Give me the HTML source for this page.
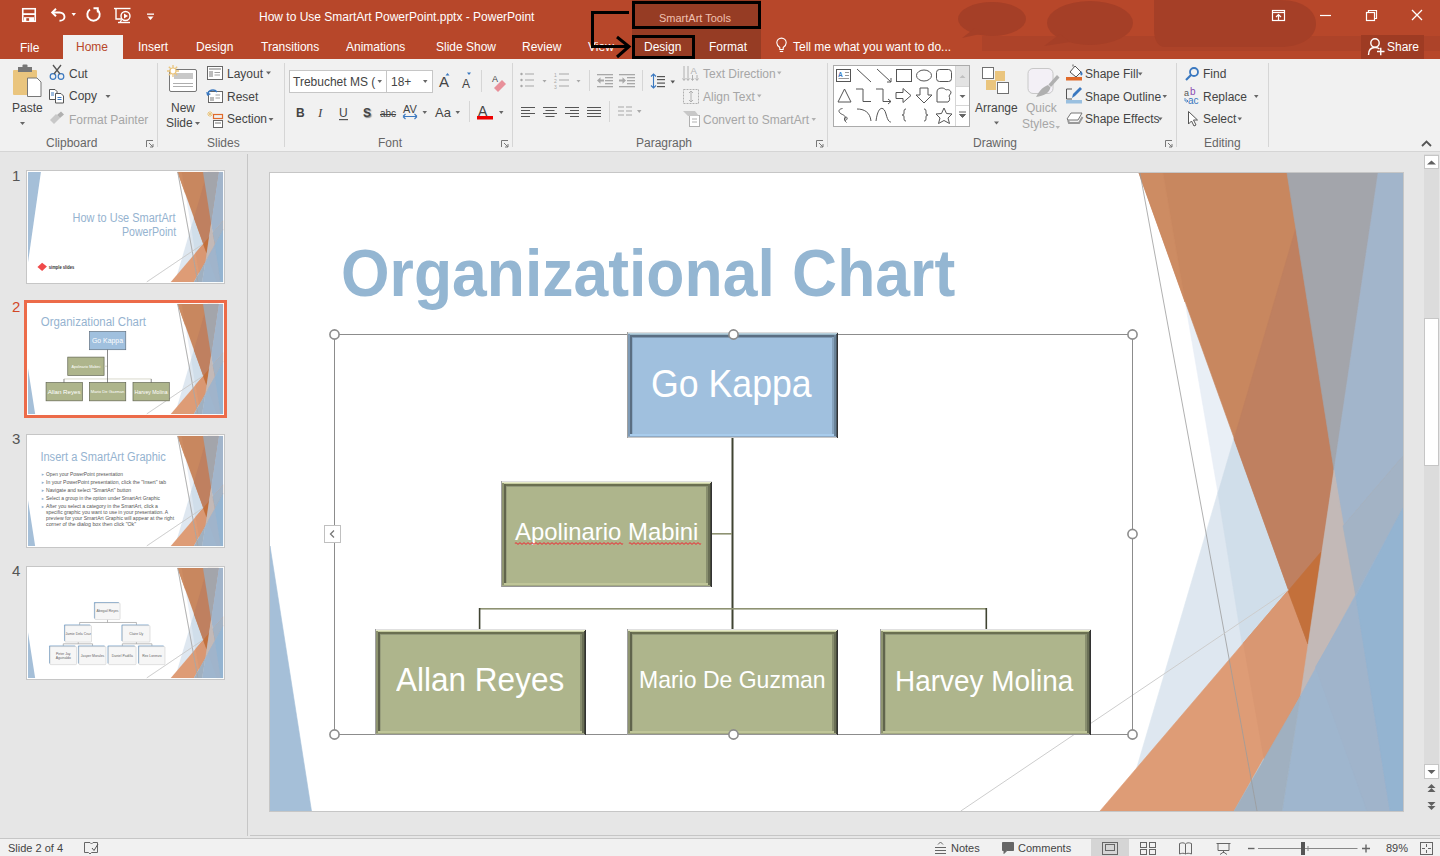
<!DOCTYPE html>
<html><head><meta charset="utf-8">
<style>
*{margin:0;padding:0;box-sizing:border-box}
html,body{width:1440px;height:856px;overflow:hidden;background:#e6e6e6;font-family:"Liberation Sans",sans-serif;position:relative}
.abs{position:absolute}
svg{position:absolute;overflow:visible}
#hdr{position:absolute;left:0;top:0;width:1440px;height:59px;background:#b7472a;overflow:hidden}
#ribbon{position:absolute;left:0;top:59px;width:1440px;height:93px;background:#f1f1f1;border-bottom:1px solid #d5d5d5}
#status{position:absolute;left:0;top:838px;width:1440px;height:18px;background:#f1f1f1;border-top:1px solid #c6c6c6}
.t{position:absolute;white-space:nowrap;font-size:12px;line-height:14px;color:#fff}
.tab{top:40px;font-size:12px}
.r{position:absolute;white-space:nowrap;font-size:12px;line-height:14px;color:#444}
.lbl{color:#666}
.s{position:absolute;white-space:nowrap;font-size:11px;line-height:13px;color:#444;top:842px}
.num{position:absolute;font-size:15px;line-height:17px;color:#555}
.thumb{position:absolute;width:199px;height:114px;border:1px solid #c6c6c6;background:#fff}
#slide{position:absolute;left:269px;top:172px;width:1135px;height:640px;background:#fff;border:1px solid #c6c6c6;overflow:hidden}
#slide svg{left:0;top:0}
.title{position:absolute;white-space:nowrap;font-size:67px;line-height:80px;font-weight:bold;color:#94b6d2}
.box{position:absolute}
.st{position:absolute;white-space:nowrap;transform-origin:0 0}
.box .bev{display:none}
.olive{background:#aeb58c;box-shadow:inset 1px 0 0 #a0a0a0,inset 0 1px 0 #e0e0e0,inset -1px 0 0 #333,inset 0 -1px 0 #959595,inset 0 2px 0 #e6eac8,inset -2px 0 0 #45493a,inset 0 -2px 0 #a3a983,inset 3px 0 0 #8e9470,inset 0 3px 0 #c5cba0,inset -4px 0 0 #6a6f56,inset 0 -4px 0 #bfc598,inset 5px 0 0 #60644c,inset 0 5px 0 #6a6f50,inset -6px 0 0 #888e6e,inset 0 6px 0 #92987a,inset 6px 0 0 #9aa07e}
.blue{background:#a0c0de;box-shadow:inset 1px 0 0 #a0a0a0,inset 0 1px 0 #dcdcdc,inset -1px 0 0 #333,inset 0 -1px 0 #c8c8c8,inset 0 2px 0 #b8d0dc,inset -2px 0 0 #4d5a66,inset 0 -2px 0 #8faac5,inset 3px 0 0 #7e9ab5,inset 0 3px 0 #9ab8c8,inset -4px 0 0 #6a8398,inset 0 -4px 0 #a8ccec,inset 5px 0 0 #5a6e82,inset 0 5px 0 #5a6e82,inset -6px 0 0 #86a2bc,inset 0 6px 0 #7d98b2,inset 6px 0 0 #8cabc8}
</style></head><body>

<div id="hdr">
  <svg class="abs" style="left:0;top:0" width="1440" height="59">
    <rect x="982" y="36" width="458" height="15" fill="#ad4329"/>
    <g fill="#a53f27">
      <ellipse cx="992" cy="19" rx="34" ry="17"/>
      <path d="M962 38 L975 28 L985 33 Z"/>
      <ellipse cx="1090" cy="23" rx="43" ry="22"/>
      <path d="M1044 46 L1060 34 L1070 42 Z"/>
      <path d="M1154 0 H1280 C1305 0 1316 12 1316 24 C1316 38 1300 47 1280 47 H1165 C1158 47 1154 40 1154 30 Z"/>
    </g>
    <rect x="632" y="0" width="129" height="59" fill="#963c24"/>
    <rect x="1361" y="35" width="63" height="24" fill="#9e3b23"/>
    <!-- QAT icons -->
    <rect x="22.75" y="8.75" width="12.5" height="12.5" fill="none" stroke="#fff" stroke-width="1.6"/>
    <rect x="22" y="13.2" width="14" height="1.8" fill="#fff"/>
    <rect x="24" y="17.2" width="10" height="4.5" fill="#fff"/>
    <rect x="26.3" y="18.2" width="2.8" height="2.6" fill="#b7472a"/>
    <g fill="none" stroke="#fff" stroke-width="1.9">
      <path d="M52.5 12.5 H59.5 C62.5 12.5 64.5 14.5 64.5 17 C64.5 19.5 62 20.8 59.5 20.8"/>
      <path d="M56 8.8 L52.2 12.5 L56 16.2"/>
      <path d="M90 9.5 A6.2 6.2 0 1 0 97 9.5"/>
      <path d="M93.5 8.3 H97.8 V12.6"/>
    </g>
    <path d="M71.5 13 H76 L73.75 16 Z" fill="#fff"/>
    <g fill="none" stroke="#fff" stroke-width="1.4">
      <path d="M114 8.5 H130.5"/>
      <path d="M116 9 V19 H122"/>
      <circle cx="125.5" cy="16" r="4.5"/>
      <path d="M118 22.5 H130"/>
      <path d="M121.5 20 L120 22.5"/>
    </g>
    <path d="M124 13.5 L128 16 L124 18.5 Z" fill="#fff"/>
    <rect x="147" y="13.5" width="7" height="1.3" fill="#fff"/>
    <path d="M147.5 16.5 H153.5 L150.5 20 Z" fill="#fff"/>
    <!-- window controls -->
    <g fill="none" stroke="#fff" stroke-width="1.2">
      <rect x="1272.5" y="10.5" width="12" height="10"/>
      <path d="M1272.5 12.5 H1284.5"/>
      <path d="M1278.5 20 V14.5 M1276 17 L1278.5 14.5 L1281 17"/>
      <path d="M1320 15.5 H1331"/>
      <rect x="1366.5" y="12.5" width="8" height="8"/>
      <path d="M1368.5 12.5 V10.5 H1376.5 V18.5 H1374.5"/>
      <path d="M1412 10 L1422 20 M1422 10 L1412 20" stroke-width="1.3"/>
    </g>
    <!-- lightbulb -->
    <g fill="none" stroke="#fff" stroke-width="1.1">
      <path d="M779.8 49.5 V47.5 C777.3 45.8 776.8 44 776.8 42.8 A4.7 4.7 0 0 1 786.2 42.8 C786.2 44 785.7 45.8 783.2 47.5 V49.5 Z"/>
      <path d="M779.8 51.5 H783.2"/>
    </g>
    <!-- share person -->
    <g fill="none" stroke="#fff" stroke-width="1.4">
      <circle cx="1375" cy="43" r="4.2"/>
      <path d="M1368.5 55 C1368.5 49.5 1371 47.5 1375 47.5 C1377 47.5 1378.5 48 1379.5 49"/>
      <path d="M1377 51.5 H1384.5 M1380.75 47.75 V55.25"/>
    </g>
  </svg>
  <div class="abs" style="left:63px;top:35px;width:60px;height:24px;background:#f1f1f1"></div>
  <div class="t" style="left:259px;top:10px;font-size:12px">How to Use SmartArt PowerPoint.pptx - PowerPoint</div>
  <div class="t" style="left:659px;top:11px;font-size:11px;color:#f0c0b0">SmartArt Tools</div>
  <div class="t tab" style="left:20px;top:41px">File</div>
  <div class="t tab" style="left:76px;color:#b7472a">Home</div>
  <div class="t tab" style="left:138px">Insert</div>
  <div class="t tab" style="left:196px">Design</div>
  <div class="t tab" style="left:261px">Transitions</div>
  <div class="t tab" style="left:346px">Animations</div>
  <div class="t tab" style="left:436px">Slide Show</div>
  <div class="t tab" style="left:522px">Review</div>
  <div class="t tab" style="left:588px">View</div>
  <div class="t tab" style="left:644px">Design</div>
  <div class="t tab" style="left:709px">Format</div>
  <div class="t tab" style="left:793px">Tell me what you want to do...</div>
  <div class="t tab" style="left:1387px">Share</div>
  <svg class="abs" style="left:0;top:0" width="1440" height="59">
    <!-- annotation boxes -->
    <rect x="633.5" y="2.5" width="126" height="25" fill="none" stroke="#000" stroke-width="3"/>
    <rect x="633.5" y="36.5" width="60" height="21" fill="none" stroke="#000" stroke-width="3"/>
    <path d="M629 12.5 H592.5 V46.5 H628" fill="none" stroke="#000" stroke-width="3"/>
    <path d="M617 37 L629 46.5 L617 57" fill="none" stroke="#000" stroke-width="3"/>
  </svg>
</div>

<div id="ribbon"></div>
<svg class="abs" style="left:0;top:0" width="1440" height="152">
  <!-- separators -->
  <g fill="#d6d6d6">
    <rect x="157" y="63" width="1" height="84"/>
    <rect x="284" y="63" width="1" height="84"/>
    <rect x="512" y="63" width="1" height="84"/>
    <rect x="827" y="63" width="1" height="84"/>
    <rect x="1176" y="63" width="1" height="84"/>
    <rect x="1268" y="63" width="1" height="84"/>
    <rect x="481" y="70" width="1" height="22"/>
    <rect x="469" y="101" width="1" height="21"/>
    <rect x="589" y="70" width="1" height="21"/>
    <rect x="642" y="70" width="1" height="21"/>
    <rect x="609" y="101" width="1" height="21"/>
  </g>
  <!-- dialog launchers -->
  <g fill="none" stroke="#777" stroke-width="1">
    <path d="M146.5 147 V140.5 H153"/><path d="M149 143 L153 147 M150 147 H153 V144"/>
    <path d="M501.5 147 V140.5 H508"/><path d="M504 143 L508 147 M505 147 H508 V144"/>
    <path d="M816.5 147 V140.5 H823"/><path d="M819 143 L823 147 M820 147 H823 V144"/>
    <path d="M1165.5 147 V140.5 H1172"/><path d="M1168 143 L1172 147 M1169 147 H1172 V144"/>
  </g>
  <!-- collapse ribbon caret -->
  <path d="M1422 146 L1426.5 141.5 L1431 146" fill="none" stroke="#555" stroke-width="1.8"/>
  <!-- Paste icon -->
  <rect x="13" y="70" width="24" height="25" rx="1" fill="#eac57e"/>
  <rect x="18" y="67" width="14" height="5" fill="#777"/>
  <rect x="22.5" y="64.5" width="5" height="4" rx="1" fill="#777"/>
  <path d="M27.5 78 H37 L41 82 V96.5 H27.5 Z" fill="#fff" stroke="#777" stroke-width="1"/>
  <path d="M20 122 H25 L22.5 125 Z" fill="#666"/>
  <!-- Cut icon -->
  <g fill="none" stroke="#3a78c0" stroke-width="1.2"><circle cx="53" cy="76.5" r="2.8"/><circle cx="61" cy="76.5" r="2.8"/></g>
  <path d="M54 74 L61 65 M60 74 L53 65" stroke="#555" stroke-width="1.3"/>
  <!-- Copy icon -->
  <path d="M49.5 89.5 H55 L57 91.5 V99.5 H49.5 Z" fill="#fff" stroke="#555" stroke-width="1"/>
  <path d="M55.5 93.5 H61 L63.5 96 V103 H55.5 Z" fill="#fff" stroke="#555" stroke-width="1"/>
  <path d="M51 93 H54 M51 95 H54 M57.5 97.5 H61.5 M57.5 99.5 H61.5" stroke="#3a78c0" stroke-width="1"/>
  <path d="M105.5 95 H110.5 L108 98 Z" fill="#666"/>
  <!-- Format painter -->
  <path d="M50 120 L56 114 L60 118 L54 124 Z" fill="#c8c8c8"/>
  <path d="M57 115 L61 111.5 L64 114.5 L60 118 Z" fill="#b0b0b0"/>
  <!-- New slide -->
  <rect x="169.5" y="69.5" width="27" height="22" rx="1.5" fill="#fff" stroke="#777" stroke-width="1"/>
  <rect x="174" y="73" width="19" height="6" fill="#c8c8c8"/>
  <path d="M173 83.5 H193 M173 86.5 H193" stroke="#999" stroke-width="0.8"/>
  <g stroke="#eac57e" stroke-width="1.3"><path d="M173 65 V77 M167 71 H179 M168.8 66.8 L177.2 75.2 M177.2 66.8 L168.8 75.2"/></g>
  <circle cx="173" cy="71" r="3" fill="#fff" stroke="#eac57e" stroke-width="1.2"/>
  <path d="M195 122 H200 L197.5 125 Z" fill="#666"/>
  <!-- Layout -->
  <rect x="207.5" y="66.5" width="15" height="13" fill="#fff" stroke="#666" stroke-width="1"/>
  <rect x="209" y="68" width="12" height="2" fill="#bbb"/><rect x="209" y="71" width="4" height="6" fill="#bbb"/>
  <path d="M214.5 72.5 H220 M214.5 75 H220" stroke="#888" stroke-width="0.8"/>
  <path d="M266 71.5 H271 L268.5 74.5 Z" fill="#666"/>
  <!-- Reset -->
  <rect x="208.5" y="91.5" width="14" height="11" fill="#fff" stroke="#666" stroke-width="1"/>
  <rect x="210" y="97" width="4" height="4" fill="#bbb"/>
  <path d="M215.5 95 H220 M215.5 98 H220" stroke="#888" stroke-width="0.8"/>
  <path d="M207.5 95 C208 90 214 88.5 217 92" fill="none" stroke="#3a78c0" stroke-width="1.5"/>
  <path d="M206 92 L207.5 96 L211 94 Z" fill="#3a78c0"/>
  <!-- Section -->
  <rect x="213.5" y="114.5" width="9" height="4" fill="none" stroke="#e06a2a" stroke-width="1.2"/>
  <rect x="213.5" y="120.5" width="9" height="7" fill="#fff" stroke="#666" stroke-width="1"/>
  <rect x="215" y="122" width="6" height="2" fill="#bbb"/>
  <g stroke="#eac57e" stroke-width="1"><path d="M210 111 V117 M207 114 H213 M208 112 L212 116 M212 112 L208 116"/></g>
  <path d="M268.5 118 H273.5 L271 121 Z" fill="#666"/>
  <!-- Font boxes -->
  <rect x="289.5" y="70.5" width="97" height="22" fill="#fff" stroke="#c6c6c6" stroke-width="1"/>
  <rect x="386.5" y="70.5" width="46" height="22" fill="#fff" stroke="#c6c6c6" stroke-width="1"/>
  <path d="M377.5 80 H382 L379.75 83 Z" fill="#666"/><path d="M423 80 H427.5 L425.25 83 Z" fill="#666"/>
  <!-- grow/shrink -->
  <path d="M447.5 73 L449.5 75.5 H445.5 Z" fill="#3a78c0"/>
  <path d="M469 75 L471 72.5 H467 Z" fill="#3a78c0"/>
  <!-- clear formatting -->
  <path d="M494 88 L502 80 L506 84 L498 92 Z" fill="#e8909a"/>
  <!-- underline, font color -->
  <rect x="339" y="119" width="9" height="1.2" fill="#555"/>
  <rect x="477" y="116" width="16" height="3.5" fill="#e00"/>
  <path d="M403 116.5 H417 M403 116.5 L405.5 114 M403 116.5 L405.5 119 M417 116.5 L414.5 114 M417 116.5 L414.5 119" stroke="#3a78c0" stroke-width="1.1" fill="none"/>
  <g fill="#666"><path d="M422.5 111 H427 L424.75 114 Z"/><path d="M455.5 111 H460 L457.75 114 Z"/><path d="M499 111 H503.5 L501.25 114 Z"/></g>
  <!-- paragraph icons -->
  <g fill="#a8a8a8">
    <circle cx="521.5" cy="74" r="1.2"/><circle cx="521.5" cy="80" r="1.2"/><circle cx="521.5" cy="86" r="1.2"/>
    <rect x="525" y="73.5" width="9" height="1"/><rect x="525" y="79.5" width="9" height="1"/><rect x="525" y="85.5" width="9" height="1"/>
    <rect x="559" y="73.5" width="10" height="1"/><rect x="559" y="79.5" width="10" height="1"/><rect x="559" y="85.5" width="10" height="1"/>
    <path d="M542.5 80 H546.5 L544.5 82.5 Z"/><path d="M576.5 80 H580.5 L578.5 82.5 Z"/>
    <rect x="597" y="74" width="16" height="1.3"/><rect x="605" y="77" width="8" height="1.3"/><rect x="605" y="80" width="8" height="1.3"/><rect x="605" y="83" width="8" height="1.3"/><rect x="597" y="86" width="16" height="1.3"/>
    <rect x="619" y="74" width="16" height="1.3"/><rect x="627" y="77" width="8" height="1.3"/><rect x="627" y="80" width="8" height="1.3"/><rect x="627" y="83" width="8" height="1.3"/><rect x="619" y="86" width="16" height="1.3"/>
    <path d="M597 80.5 L600.5 77.2 V79.5 H604 V81.5 H600.5 V83.8 Z"/><path d="M626 80.5 L622.5 77.2 V79.5 H619 V81.5 H622.5 V83.8 Z"/>
    <rect x="618" y="106.5" width="6" height="1"/><rect x="618" y="110.5" width="6" height="1"/><rect x="618" y="114.5" width="6" height="1"/>
    <rect x="626" y="106.5" width="6" height="1"/><rect x="626" y="110.5" width="6" height="1"/><rect x="626" y="114.5" width="6" height="1"/>
    <path d="M637 110 H641.5 L639.25 113 Z"/>
  </g>
  <text x="554" y="77" font-size="5" fill="#a8a8a8" font-family="Liberation Sans">1</text>
  <text x="554" y="83" font-size="5" fill="#a8a8a8" font-family="Liberation Sans">2</text>
  <text x="554" y="89" font-size="5" fill="#a8a8a8" font-family="Liberation Sans">3</text>
  
  <path d="M634 79 L631 76 M634 79 L631 82 M628 79 H634" stroke="#fff" stroke-width="0" fill="none"/>
  
  <g fill="#555">
    <rect x="521" y="107" width="14" height="1"/><rect x="521" y="110" width="9" height="1"/><rect x="521" y="113" width="14" height="1"/><rect x="521" y="116" width="9" height="1"/>
    <rect x="543" y="107" width="14" height="1"/><rect x="545.5" y="110" width="9" height="1"/><rect x="543" y="113" width="14" height="1"/><rect x="545.5" y="116" width="9" height="1"/>
    <rect x="565" y="107" width="14" height="1"/><rect x="570" y="110" width="9" height="1"/><rect x="565" y="113" width="14" height="1"/><rect x="570" y="116" width="9" height="1"/>
    <rect x="587" y="107" width="14" height="1"/><rect x="587" y="110" width="14" height="1"/><rect x="587" y="113" width="14" height="1"/><rect x="587" y="116" width="14" height="1"/>
    <rect x="657" y="76" width="8" height="1.2"/><rect x="657" y="79" width="8" height="1.2"/><rect x="657" y="82.5" width="8" height="1.2"/><rect x="657" y="86" width="8" height="1.2"/>
    <path d="M670.5 80.5 H675 L672.75 83.5 Z"/>
  </g>
  <path d="M653.5 74 V88 M651 76.5 L653.5 74 L656 76.5 M651 85.5 L653.5 88 L656 85.5" stroke="#3a78c0" stroke-width="1.1" fill="none"/>
  <!-- text direction etc (disabled) -->
  <g stroke="#b0b0b0" stroke-width="1" fill="none">
    <path d="M684 66 V80 M688 66 V80 M692.5 75 V80 M697 75 V80 M682.5 78.5 L684 80.5 L685.5 78.5 M686.5 78.5 L688 80.5 L689.5 78.5 M691 78.5 L692.5 80.5 L694 78.5 M695.5 78.5 L697 80.5 L698.5 78.5"/>
    <rect x="683.5" y="89.5" width="15" height="14" stroke-dasharray="2 1"/>
    <path d="M691 91 V102 M689 93 L691 91 L693 93 M689 100 L691 102 L693 100"/>
    <rect x="689.5" y="115.5" width="10" height="11" fill="#fff"/>
    <path d="M692 119 H697 M692 122 H697"/>
  </g>
  <text x="690.5" y="73.5" font-size="9.5" fill="#b0b0b0" font-family="Liberation Sans">A</text>
  <path d="M683 111 H695 L699 116 H688 Z" fill="#c8c8c8"/>
  <g fill="#b0b0b0"><path d="M777 71.5 H781.5 L779.25 74.5 Z"/><path d="M757 94.5 H761.5 L759.25 97.5 Z"/><path d="M811.5 118 H816 L813.75 121 Z"/></g>
  <!-- shapes gallery -->
  <rect x="833.5" y="65.5" width="136" height="61" fill="#fff" stroke="#ababab" stroke-width="1"/>
  <rect x="956" y="66" width="13" height="20" fill="#e3e3e3"/>
  <path d="M955.5 66 V126 M956 86.5 H969 M956 105.5 H969" stroke="#d6d6d6" stroke-width="1"/>
  <path d="M959.5 78 L962.5 75 L965.5 78 Z" fill="#c0c0c0"/>
  <path d="M959.5 95 H965.5 L962.5 98 Z" fill="#666"/>
  <path d="M959 112 H966 M959.5 114.5 H965.5 L962.5 117.5 Z" stroke="#666" stroke-width="1" fill="#666"/>
  <g fill="none" stroke="#555" stroke-width="1">
    <rect x="836.5" y="69.5" width="14" height="12" fill="#fff"/>
    <path d="M845 72.5 H849 M845 75.5 H849 M838.5 78.5 H849" stroke="#999"/>
    <path d="M857 69 L871 82"/>
    <path d="M877 69 L891 82 M891 82 V78 M891 82 H887"/>
    <rect x="896.5" y="69.5" width="15" height="12"/>
    <ellipse cx="924" cy="75.5" rx="7.5" ry="5.5"/>
    <rect x="936.5" y="69.5" width="15" height="12" rx="3"/>
    <path d="M838 102 L844.5 89 L851 102 Z"/>
    <path d="M856 89 H863 V101.5 H871"/>
    <path d="M876 89 H883 V101.5 H891 M888 99 L891 101.5 L888 104"/>
    <path d="M896 92.5 H903 V88.5 L911 95.5 L903 102.5 V98.5 H896 Z"/>
    <path d="M920 88 H928 V95 H932 L924 103 L916 95 H920 Z"/>
    <path d="M937 92 C937 89 939 88 942 88 C944 88 945 89 946 90 C948 89 951 90 951 93 L949 96 C950 98 950 101 948 102 H937 Z"/>
    <path d="M842.5 108.5 C839 109 838 111 840 113 C842 115 846 115 845 118 C844 121 846 121 847 119 C848 117 845 116 844.5 119 C844.5 121 846 122 846.5 122.5"/>
    <path d="M857 109 C864 109 870 112 871 121"/>
    <path d="M876 121 C878 105 884 106 886 114 C888 122 890 122 891 122"/>
    <path d="M906 109 C904 109 904 110 904 113 C904 115 903 115 902 115 C903 115 904 115 904 117 C904 120 904 121 906 121"/>
    <path d="M924 109 C926 109 926 110 926 113 C926 115 927 115 928 115 C927 115 926 115 926 117 C926 120 926 121 924 121"/>
    <path d="M944 108 L946.5 113.5 L952 114 L948 118 L949.5 123.5 L944 120.5 L938.5 123.5 L940 118 L936 114 L941.5 113.5 Z"/>
  </g>
  <text x="838" y="76.5" font-size="6.5" font-weight="bold" fill="#3a78c0" font-family="Liberation Sans">A</text>
  <!-- Arrange -->
  <rect x="995" y="71" width="10" height="10" fill="#eac57e"/>
  <rect x="986" y="80" width="10" height="10" fill="#eac57e"/>
  <rect x="982.5" y="67.5" width="11" height="11" fill="#fff" stroke="#707070" stroke-width="1"/>
  <rect x="997.5" y="82.5" width="11" height="11" fill="#fff" stroke="#707070" stroke-width="1"/>
  <path d="M994 121.5 H999 L996.5 124.5 Z" fill="#666"/>
  <!-- Quick styles -->
  <rect x="1028" y="68.5" width="25" height="25" rx="5" fill="#f3f0f6" stroke="#c8c8c8" stroke-width="1"/>
  <path d="M1057 75 L1059.5 77.5 L1051 87 L1048.5 84.5 Z" fill="#b0b0b0"/><path d="M1048 85 L1050.5 87.5 C1049 93 1044 96 1036 97 C1038 93 1042 87 1048 85 Z" fill="#b0b0b0"/>
  <path d="M1055.5 126 H1060 L1057.75 129 Z" fill="#b8b8b8"/>
  <!-- Shape fill/outline/effects -->
  <path d="M1070 72 L1075 66 L1081 72 L1076 77 Z" fill="#fff" stroke="#555" stroke-width="1"/>
  <path d="M1073 66.5 V64.5" stroke="#555"/>
  <path d="M1081 71 C1083 73 1083 75 1081.5 75.5 C1080 75.5 1080 73 1081 71 Z" fill="#3a78c0"/>
  <rect x="1066" y="77" width="16" height="3.5" fill="#e06a2a"/>
  <path d="M1066.5 89 V99 H1072" fill="none" stroke="#555" stroke-width="1"/>
  <path d="M1066.5 89 H1072" fill="none" stroke="#555" stroke-width="1" />
  <path d="M1072 98 L1073 94 L1080 87 L1082 89 L1075 96 Z" fill="#3a78c0"/>
  <rect x="1066" y="100" width="16" height="3.5" fill="#9ac0e0"/>
  <path d="M1067 119 L1071 113 H1082 L1078 120 H1068 Z" fill="#fff" stroke="#777" stroke-width="1"/>
  <path d="M1068 120 L1069 123 H1079 L1082.5 117" fill="none" stroke="#999" stroke-width="2"/>
  <g fill="#666"><path d="M1138 72.5 H1142.5 L1140.25 75.5 Z"/><path d="M1162.5 95 H1167 L1164.75 98 Z"/><path d="M1158 117.5 H1162.5 L1160.25 120.5 Z"/></g>
  <!-- Find / Replace / Select -->
  <circle cx="1194" cy="72" r="4" fill="none" stroke="#3a78c0" stroke-width="1.8"/>
  <path d="M1191 75 L1186 80" stroke="#3a78c0" stroke-width="2.2"/>
  <text x="1184" y="96" font-size="9" fill="#555" font-family="Liberation Sans">a</text>
  <text x="1190" y="95" font-size="10" fill="#8a4ab0" font-family="Liberation Sans">b</text>
  <text x="1188" y="104" font-size="10" fill="#3a78c0" font-family="Liberation Sans">ac</text>
  <path d="M1185 98 V101 H1188 M1186.5 99.5 L1188 101 L1186.5 102.5" fill="none" stroke="#3a78c0" stroke-width="0.8"/>
  <path d="M1254 95 H1258.5 L1256.25 98 Z" fill="#666"/>
  <path d="M1188.5 111.5 V124 L1191.5 121 L1194 126 L1196 125 L1193.5 120 H1197.5 Z" fill="#fff" stroke="#555" stroke-width="1"/>
  <path d="M1237.5 117.5 H1242 L1239.75 120.5 Z" fill="#666"/>
</svg>
<div class="r" style="left:12px;top:101px">Paste</div>
<div class="r" style="left:69px;top:67px">Cut</div>
<div class="r" style="left:69px;top:89px">Copy</div>
<div class="r" style="left:69px;top:113px;color:#a6a6a6">Format Painter</div>
<div class="r lbl" style="left:46px;top:136px">Clipboard</div>
<div class="r" style="left:171px;top:101px">New</div>
<div class="r" style="left:166px;top:116px">Slide</div>
<div class="r" style="left:227px;top:67px">Layout</div>
<div class="r" style="left:227px;top:90px">Reset</div>
<div class="r" style="left:227px;top:112px">Section</div>
<div class="r lbl" style="left:207px;top:136px">Slides</div>
<div class="r" style="left:293px;top:75px">Trebuchet MS (</div>
<div class="r" style="left:391px;top:75px">18+</div>
<div class="r lbl" style="left:378px;top:136px">Font</div>
<div class="r" style="left:439px;top:75px;font-size:15px">A</div>
<div class="r" style="left:462px;top:77px;font-size:12px">A</div>
<div class="r" style="left:492px;top:72px;font-size:9px">A</div>
<div class="r" style="left:296px;top:106px;font-weight:bold">B</div>
<div class="r" style="left:318px;top:106px;font-style:italic;font-family:'Liberation Serif',serif;font-size:13px">I</div>
<div class="r" style="left:339px;top:106px">U</div>
<div class="r" style="left:363px;top:106px;font-weight:bold;text-shadow:1px 1px 1px #888">S</div>
<div class="r" style="left:380px;top:107px;font-size:10px;text-decoration:line-through">abc</div>
<div class="r" style="left:403px;top:102px;font-size:11px">AV</div>
<div class="r" style="left:435px;top:106px;font-size:13px">Aa</div>
<div class="r" style="left:478px;top:104px;font-size:14px">A</div>
<div class="r" style="left:703px;top:67px;color:#a6a6a6">Text Direction</div>
<div class="r" style="left:703px;top:90px;color:#a6a6a6">Align Text</div>
<div class="r" style="left:703px;top:113px;color:#a6a6a6">Convert to SmartArt</div>
<div class="r lbl" style="left:636px;top:136px">Paragraph</div>
<div class="r" style="left:975px;top:101px">Arrange</div>
<div class="r" style="left:1026px;top:101px;color:#a6a6a6">Quick</div>
<div class="r" style="left:1022px;top:117px;color:#a6a6a6">Styles</div>
<div class="r lbl" style="left:973px;top:136px">Drawing</div>
<div class="r" style="left:1085px;top:67px">Shape Fill</div>
<div class="r" style="left:1085px;top:90px">Shape Outline</div>
<div class="r" style="left:1085px;top:112px">Shape Effects</div>
<div class="r" style="left:1203px;top:67px">Find</div>
<div class="r" style="left:1203px;top:90px">Replace</div>
<div class="r" style="left:1203px;top:112px">Select</div>
<div class="r lbl" style="left:1204px;top:136px">Editing</div>

<div class="abs" style="left:247px;top:154px;width:1px;height:682px;background:#c6c6c6"></div>
<div class="abs" style="left:250px;top:835px;width:1190px;height:1px;background:#c6c6c6"></div>
<!-- scrollbar -->
<div class="abs" style="left:1424px;top:154px;width:15px;height:612px;background:#dcdcdc"></div>
<div class="abs" style="left:1424px;top:155px;width:15px;height:14px;background:#fff;border:1px solid #c6c6c6"></div>
<div class="abs" style="left:1424px;top:318px;width:15px;height:148px;background:#fff;border:1px solid #c6c6c6"></div>
<div class="abs" style="left:1424px;top:764px;width:15px;height:15px;background:#fff;border:1px solid #c6c6c6"></div>
<svg class="abs" style="left:1424px;top:150px" width="20" height="670">
  <path d="M3 14.5 L7.5 10.5 L12 14.5 Z" fill="#606060"/>
  <path d="M3.5 620 H11.5 L7.5 624 Z" fill="#606060"/>
  <path d="M3.5 638 L7.5 634 L11.5 638 Z M3.5 642 L7.5 638 L11.5 642 Z" fill="#606060"/>
  <path d="M3.5 652 H11.5 L7.5 656 Z M3.5 656 H11.5 L7.5 660 Z" fill="#606060"/>
</svg>
<!-- thumbnails -->
<div class="num" style="left:12px;top:166.5px">1</div>
<div class="num" style="left:12px;top:298px;color:#d24726">2</div>
<div class="num" style="left:12px;top:430px">3</div>
<div class="num" style="left:12px;top:562px">4</div>
<div class="thumb" style="left:26px;top:170px"></div>
<div class="abs" style="left:24px;top:300px;width:203px;height:118px;border:3px solid #ec6b49;background:#fff"></div>
<div class="thumb" style="left:26px;top:434px"></div>
<div class="thumb" style="left:26px;top:566px"></div>
<svg class="abs" style="left:28px;top:172px" width="195" height="110" viewBox="0 0 1133 638">
  <rect width="1133" height="638" fill="#fff"/>
  <polygon points="0,0 75,0 0,525" fill="#a5bfd8"/>
  <use href="#bgR"/>
  <line x1="870" y1="0" x2="987" y2="638" stroke="#a8a8a8" stroke-width="5"/><line x1="690" y1="638" x2="1018" y2="417" stroke="#c8c8c8" stroke-width="5"/>
  <text x="259" y="290" font-size="70" fill="#95b3d0" textLength="598" lengthAdjust="spacingAndGlyphs" font-family="Liberation Sans">How to Use SmartArt</text>
  <text x="546" y="370" font-size="70" fill="#95b3d0" textLength="315" lengthAdjust="spacingAndGlyphs" font-family="Liberation Sans">PowerPoint</text>
  <path d="M55 552 L82 526 L110 548 L82 574 Z" fill="#f04a4a"/>
  <text x="121" y="562" font-size="26" font-weight="bold" fill="#333" textLength="148" lengthAdjust="spacingAndGlyphs" font-family="Liberation Sans">simple slides</text>
</svg>
<svg class="abs" style="left:28px;top:304px" width="195" height="110" viewBox="0 0 1133 638">
  <rect width="1133" height="638" fill="#fff"/>
  <polygon points="0,373 41.5,638 0,638" fill="#a5bfd8"/>
  <use href="#bgR"/>
  <line x1="870" y1="0" x2="987" y2="638" stroke="#a8a8a8" stroke-width="5"/><line x1="690" y1="638" x2="1018" y2="417" stroke="#c8c8c8" stroke-width="5"/>
  <text x="74" y="128" font-size="70" fill="#95b3d0" textLength="611" lengthAdjust="spacingAndGlyphs" font-family="Liberation Sans">Organizational Chart</text>
  <rect x="357" y="159" width="211" height="106" fill="#a0c0de" stroke="#607080" stroke-width="4"/>
  <rect x="231" y="308" width="211" height="106" fill="#aeb58c" stroke="#606450" stroke-width="4"/>
  <rect x="105" y="456" width="211" height="106" fill="#aeb58c" stroke="#606450" stroke-width="4"/>
  <rect x="357" y="456" width="211" height="106" fill="#aeb58c" stroke="#606450" stroke-width="4"/>
  <rect x="610" y="456" width="211" height="106" fill="#aeb58c" stroke="#606450" stroke-width="4"/>
  <path d="M209 435 H716 M442 361 H462" stroke="#c8c8b4" stroke-width="4" fill="none"/><path d="M462 265 V456 M209 435 V456 M716 435 V456" stroke="#555" stroke-width="4" fill="none"/>
  <text x="462" y="225" font-size="40" fill="#fff" text-anchor="middle" font-family="Liberation Sans">Go Kappa</text>
  <text x="336" y="370" font-size="22" fill="#fff" text-anchor="middle" font-family="Liberation Sans">Apolinario Mabini</text>
  <text x="210" y="520" font-size="36" fill="#fff" text-anchor="middle" font-family="Liberation Sans">Allan Reyes</text>
  <text x="462" y="518" font-size="24" fill="#fff" text-anchor="middle" font-family="Liberation Sans">Mario De Guzman</text>
  <text x="715" y="520" font-size="30" fill="#fff" text-anchor="middle" font-family="Liberation Sans">Harvey Molina</text>
</svg>
<svg class="abs" style="left:28px;top:436px" width="195" height="110" viewBox="0 0 1133 638">
  <rect width="1133" height="638" fill="#fff"/>
  <polygon points="0,373 41.5,638 0,638" fill="#a5bfd8"/>
  <use href="#bgR"/>
  <line x1="870" y1="0" x2="987" y2="638" stroke="#a8a8a8" stroke-width="5"/><line x1="690" y1="638" x2="1018" y2="417" stroke="#c8c8c8" stroke-width="5"/>
  <text x="72" y="145" font-size="70" fill="#95b3d0" textLength="729" lengthAdjust="spacingAndGlyphs" font-family="Liberation Sans">Insert a SmartArt Graphic</text>
  <g font-size="28" fill="#555" font-family="Liberation Sans">
    <text x="105" y="232" textLength="447" lengthAdjust="spacingAndGlyphs">Open your PowerPoint presentation</text>
    <text x="105" y="279" textLength="697" lengthAdjust="spacingAndGlyphs">In your PowerPoint presentation, click the "Insert" tab</text>
    <text x="105" y="326" textLength="494" lengthAdjust="spacingAndGlyphs">Navigate and select "SmartArt" button</text>
    <text x="105" y="373" textLength="662" lengthAdjust="spacingAndGlyphs">Select a group in the option under SmartArt Graphic</text>
    <text x="105" y="420" textLength="650" lengthAdjust="spacingAndGlyphs">After you select a category in the SmartArt, click a</text>
    <text x="105" y="454" textLength="709" lengthAdjust="spacingAndGlyphs">specific graphic you want to use in your presentation. A</text>
    <text x="105" y="488" textLength="744" lengthAdjust="spacingAndGlyphs">preview for your SmartArt Graphic will appear at the right</text>
    <text x="105" y="522" textLength="523" lengthAdjust="spacingAndGlyphs">corner of the dialog box then click "Ok"</text>
  </g>
  <g fill="#95b3d0"><path d="M80 217 L95 224 L80 231Z"/><path d="M80 264 L95 271 L80 278Z"/><path d="M80 311 L95 318 L80 325Z"/><path d="M80 358 L95 365 L80 372Z"/><path d="M80 405 L95 412 L80 419Z"/></g>
</svg>
<svg class="abs" style="left:28px;top:568px" width="195" height="110" viewBox="0 0 1133 638">
  <rect width="1133" height="638" fill="#fff"/>
  <polygon points="0,373 41.5,638 0,638" fill="#a5bfd8"/>
  <use href="#bgR"/>
  <line x1="870" y1="0" x2="987" y2="638" stroke="#a8a8a8" stroke-width="5"/><line x1="690" y1="638" x2="1018" y2="417" stroke="#c8c8c8" stroke-width="5"/>
  <path d="M462 299 V316 M300 316 H630 M300 316 V334 M630 316 V334 M292 430 V440 M205 440 H375 M205 440 V456 M375 440 V456 M630 430 V440 M548 440 H720 M548 440 V456 M720 440 V456" stroke="#9a9a9a" stroke-width="4" fill="none"/>
  <g fill="#8aaed0">
    <rect x="383" y="197" width="146" height="96" rx="5"/>
    <rect x="209" y="328" width="154" height="96" rx="5"/>
    <rect x="543" y="328" width="160" height="96" rx="5"/>
    <rect x="122" y="450" width="154" height="105" rx="5"/>
    <rect x="290" y="450" width="157" height="105" rx="5"/>
    <rect x="462" y="450" width="160" height="105" rx="5"/>
    <rect x="639" y="450" width="151" height="105" rx="5"/>
  </g>
  <g fill="#f6f6f6" stroke="#c8c8c8" stroke-width="3">
    <rect x="389" y="203" width="146" height="96" rx="5"/>
    <rect x="215" y="334" width="154" height="96" rx="5"/>
    <rect x="549" y="334" width="160" height="96" rx="5"/>
    <rect x="128" y="456" width="154" height="105" rx="5"/>
    <rect x="296" y="456" width="157" height="105" rx="5"/>
    <rect x="468" y="456" width="160" height="105" rx="5"/>
    <rect x="645" y="456" width="151" height="105" rx="5"/>
  </g>
  <g font-size="20" fill="#666" font-family="Liberation Sans" text-anchor="middle">
    <text x="462" y="258">Abegail Reyes</text>
    <text x="292" y="389">Jamie Dela Cruz</text>
    <text x="629" y="389">Claire Uy</text>
    <text x="205" y="505">Peter Jay</text><text x="205" y="528">Aguinaldo</text>
    <text x="375" y="516">Jasper Morales</text>
    <text x="548" y="516">Daniel Padilla</text>
    <text x="720" y="516">Rex Lorenzo</text>
  </g>
</svg>
<!-- status bar -->
<div id="status"></div>
<div class="abs" style="left:1091px;top:839px;width:38px;height:17px;background:#d5d5d5"></div>
<div class="s" style="left:8px">Slide 2 of 4</div>
<div class="s" style="left:951px">Notes</div>
<div class="s" style="left:1018px">Comments</div>
<div class="s" style="left:1386px">89%</div>
<svg class="abs" style="left:0;top:838px" width="1440" height="18">
  <g fill="none" stroke="#666" stroke-width="1">
    <path d="M84.5 4.5 H90 L91.5 6 L93 4.5 H97.5 V14.5 H91.5 L90 16 L88.5 14.5 H84.5 Z"/>
    <path d="M92 10 L94 12.5 L98 6" stroke="#555"/>
    <path d="M935 9.5 H946 M935 12.5 H946 M935 15.5 H946 M938 6.5 L940.5 4 L943 6.5"/>
    <path d="M1002.5 4.5 H1013.5 V12.5 H1007 L1004 15.5 V12.5 H1002.5 Z" fill="#666"/>
    <rect x="1102.5" y="4.5" width="15" height="12"/>
    <rect x="1105.5" y="6.5" width="9" height="6"/>
    <rect x="1140.5" y="4.5" width="6" height="5"/><rect x="1149.5" y="4.5" width="6" height="5"/>
    <rect x="1140.5" y="11.5" width="6" height="5"/><rect x="1149.5" y="11.5" width="6" height="5"/>
    <path d="M1179.5 5.5 C1182 4.5 1184 4.5 1185.5 6 C1187 4.5 1189 4.5 1191.5 5.5 V16 C1189 15 1187 15 1185.5 16 C1184 15 1182 15 1179.5 16 Z"/>
    <path d="M1185.5 6 V16"/>
    <path d="M1216.5 5.5 H1230.5 M1218 5.5 V12.5 H1229 V5.5 M1223.5 12.5 V15 M1220 16.5 L1223.5 14 L1227 16.5"/>
    <path d="M1248 10.5 H1254.5" stroke-width="1.4"/>
    <path d="M1258 10.5 H1357.5" stroke="#888"/>
    <path d="M1308 8 V13" stroke="#888"/>
    <path d="M1362 10.5 H1370 M1366 6.5 V14.5" stroke-width="1.4"/>
    <rect x="1420.5" y="4.5" width="12" height="12"/>
    <path d="M1426.5 6 V9 M1426.5 12 V15 M1422 10.5 H1425 M1428 10.5 H1431"/>
  </g>
  <rect x="1301" y="4" width="4" height="13" fill="#555"/>
</svg>

<svg width="0" height="0" style="position:absolute">
  <defs>
    <g id="bgR">
      <polygon points="1042,0 1133,0 1133,638 854,638" fill="#dee7f0" stroke="#dee7f0" stroke-width="0.6"/>
      <polygon points="893,0 1042,0 948,320" fill="#e9eff6" stroke="#e9eff6" stroke-width="0.6"/>
      <polygon points="1042,0 1133,0 1133,638 999,638 948,320" fill="#d0deea" stroke="#d0deea" stroke-width="0.6"/>
      <polygon points="830,638 1133,283 1133,335 964,638" fill="#de9c76" stroke="#de9c76" stroke-width="0.6"/>
      <polygon points="973.4,470 1133,283 1133,335 994.5,588.6" fill="#d99772" stroke="#d99772" stroke-width="0.6"/>
      <polygon points="869,0 1108,0 1038,471" fill="#c8875f" stroke="#c8875f" stroke-width="0.6"/>
      <polygon points="869,0 893,0 915,129" fill="#cd8c63" stroke="#cd8c63" stroke-width="0.6"/>
      <polygon points="1042,0 1108,0 1038,471 964,266" fill="#bf8060" stroke="#bf8060" stroke-width="0.6"/>
      <polygon points="1018,418 1051,379 1038,471" fill="#c3703b" stroke="#c3703b" stroke-width="0.6"/>
      <polygon points="1017,0 1108,0 1064,297" fill="#a3a5ab" stroke="#a3a5ab" stroke-width="0.6"/>
      <polygon points="1108,0 1133,0 1133,283 1073,353 1064,297" fill="#a2b5cb" stroke="#a2b5cb" stroke-width="0.6"/>
      <polygon points="1064,297 1086,424 1030.5,523" fill="#c3b9b7" stroke="#c3b9b7" stroke-width="0.6"/>
      <polygon points="1073,353 1133,283 1133,335 1086,424" fill="#a3b3c5" stroke="#a3b3c5" stroke-width="0.6"/>
      <polygon points="1030.5,523 1133,335 1133,638 1012,638" fill="#9fb6ce" stroke="#9fb6ce" stroke-width="0.6"/>
      <polygon points="1045.5,494 1086,424 1120,638 1097,638" fill="#a0b4cb" stroke="#a0b4cb" stroke-width="0.6"/>
      <polygon points="1086,424 1133,335 1133,638 1120,638" fill="#94b4d1" stroke="#94b4d1" stroke-width="0.6"/>
      <polygon points="1030.5,523 1012,638 964,638" fill="#a0b0c0" stroke="#a0b0c0" stroke-width="0.6"/>
      <line x1="870" y1="0" x2="987" y2="638" stroke="#9c9c9c" stroke-width="0.8"/>
      <line x1="690.8" y1="638" x2="1018.5" y2="417" stroke="#cdcdcd" stroke-width="1"/>
    </g>
  </defs>
</svg>
<div id="slide">
  <svg class="abs" style="left:0;top:0" width="1133" height="638" viewBox="0 0 1133 638">
    <rect width="1133" height="638" fill="#fff"/>
    <polygon points="0,373 41.5,638 0,638" fill="#a5bfd8" stroke="#a5bfd8" stroke-width="0.6"/>
    <use href="#bgR"/>
  </svg>
</div>

<svg class="abs" style="left:0;top:0" width="1440" height="856">
  <!-- selection frame -->
  <rect x="334.5" y="334.5" width="798" height="400" fill="none" stroke="#8c8c8c" stroke-width="1"/>
  <!-- connectors -->
  <rect x="731.5" y="438" width="2" height="191" fill="#404432"/>
  <rect x="712" y="533" width="20" height="1.6" fill="#8e9272"/>
  <rect x="479" y="608" width="508" height="1.6" fill="#8e9272"/>
  <rect x="478.8" y="608" width="1.6" height="22" fill="#404432"/>
  <rect x="985.5" y="608" width="1.6" height="22" fill="#404432"/>
</svg>
<div class="box blue" style="left:627px;top:332px;width:211px;height:106px"><div class="bev"></div></div>
<div class="box olive" style="left:501px;top:481px;width:211px;height:106px"><div class="bev"></div></div>
<div class="box olive" style="left:375px;top:629px;width:211px;height:106px"><div class="bev"></div></div>
<div class="box olive" style="left:627px;top:629px;width:211px;height:106px"><div class="bev"></div></div>
<div class="box olive" style="left:880px;top:629px;width:211px;height:106px"><div class="bev"></div></div>
<div class="st" style="left:341.4px;top:238.8px;font-size:67.3px;line-height:67.3px;font-weight:bold;color:#94b6d2;transform:scaleX(0.928)">Organizational Chart</div>
<div class="st" style="left:651.3px;top:363.7px;font-size:39.3px;line-height:39.3px;font-weight:normal;color:#fff;transform:scaleX(0.908)">Go Kappa</div>
<div class="st" style="left:515.1px;top:520.4px;font-size:23.9px;line-height:23.9px;font-weight:normal;color:#fff;transform:scaleX(1.0)">Apolinario Mabini</div>
<div class="st" style="left:396.0px;top:663.1px;font-size:33.9px;line-height:33.9px;font-weight:normal;color:#fff;transform:scaleX(0.93)">Allan Reyes</div>
<div class="st" style="left:638.6px;top:668.1px;font-size:24.2px;line-height:24.2px;font-weight:normal;color:#fff;transform:scaleX(0.951)">Mario De Guzman</div>
<div class="st" style="left:895.1px;top:665.9px;font-size:29.6px;line-height:29.6px;font-weight:normal;color:#fff;transform:scaleX(0.943)">Harvey Molina</div>
<svg class="abs" style="left:0;top:0" width="1440" height="856">
  <g fill="#fff" stroke="#8c8c8c" stroke-width="1.6">
    <circle cx="334.5" cy="334.5" r="4.6"/><circle cx="733.5" cy="334.5" r="4.6"/><circle cx="1132.5" cy="334.5" r="4.6"/>
    <circle cx="334.5" cy="534" r="4.6"/><circle cx="1132.5" cy="534" r="4.6"/>
    <circle cx="334.5" cy="734.5" r="4.6"/><circle cx="733.5" cy="734.5" r="4.6"/><circle cx="1132.5" cy="734.5" r="4.6"/>
  </g>
  <rect x="324.5" y="525.5" width="16" height="17" fill="#fff" stroke="#c0c0c0" stroke-width="1"/>
  <path d="M334 530.5 L330.5 534 L334 537.5" fill="none" stroke="#777" stroke-width="1.3"/>
  <!-- red squiggle -->
  <path d="M515 543.5 q1 -1.3 2 0 t2 0 t2 0 t2 0 t2 0 t2 0 t2 0 t2 0 t2 0 t2 0 t2 0 t2 0 t2 0 t2 0 t2 0 t2 0 t2 0 t2 0 t2 0 t2 0 t2 0 t2 0 t2 0 t2 0 t2 0 t2 0 t2 0 t2 0 t2 0 t2 0 t2 0 t2 0 t2 0 t2 0 t2 0 t2 0 t2 0 t2 0 t2 0 t2 0 t2 0 t2 0 t2 0 t2 0 t2 0 t2 0 t2 0 t2 0 t2 0 t2 0 t2 0 t2 0 t2 0 t2 0" fill="none" stroke="#e04848" stroke-width="1.2"/>
  <path d="M629 543.5 q1 -1.3 2 0 t2 0 t2 0 t2 0 t2 0 t2 0 t2 0 t2 0 t2 0 t2 0 t2 0 t2 0 t2 0 t2 0 t2 0 t2 0 t2 0 t2 0 t2 0 t2 0 t2 0 t2 0 t2 0 t2 0 t2 0 t2 0 t2 0 t2 0 t2 0 t2 0 t2 0 t2 0 t2 0 t2 0 t2 0 t2 0" fill="none" stroke="#e04848" stroke-width="1.2"/>
</svg>

</body></html>
